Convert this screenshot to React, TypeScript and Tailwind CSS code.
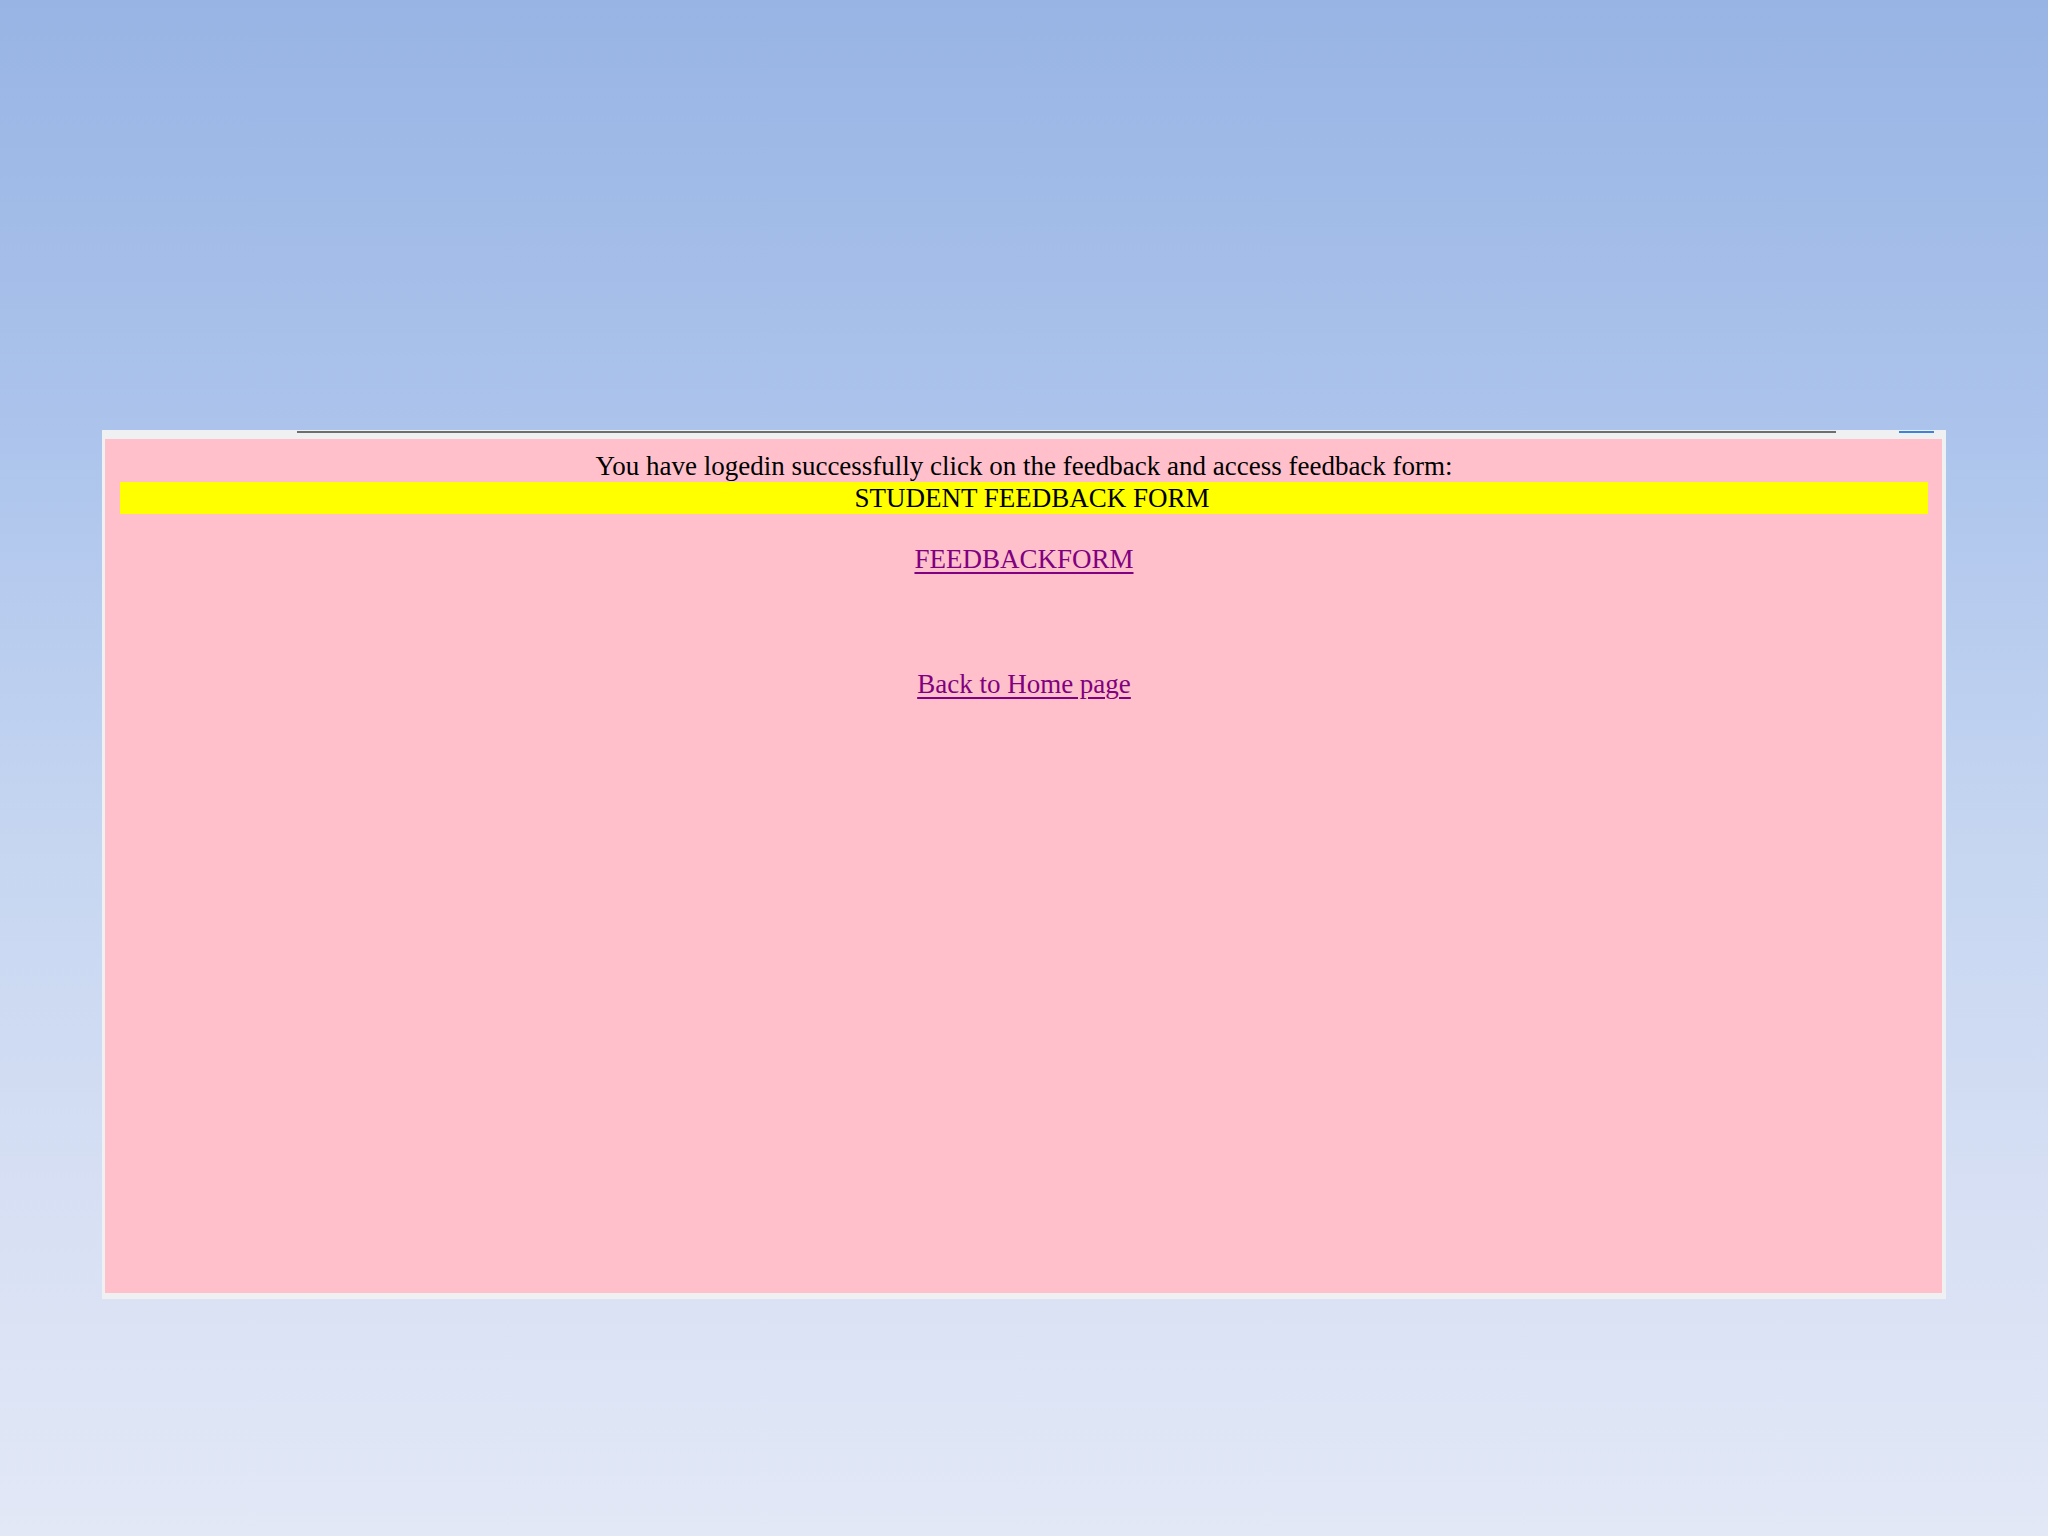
import React from "react";

export default function App() {
  return (
    <div className="w-full h-[1536px] overflow-hidden bg-[linear-gradient(to_bottom,#98b4e4_0%,#acc4ec_28%,#c6d6f1_55%,#d8e0f4_80%,#e2e8f6_100%)] pt-[430px] pl-[102px] font-['Liberation_Serif',serif]">
      <div className="w-[1844px] h-[869px] flex flex-col bg-[#eef0f1] pl-[3px] pr-[4px] pb-[6px]">
        <div className="h-[9px] flex items-start -ml-[3px]">
          <div className="ml-[195px] mt-[1px] w-[1539px] h-[2px] bg-[#6e6e6e]" />
          <div className="ml-[63px] mt-[1px] w-[35px] h-[2px] bg-[#3d83d9]" />
        </div>
        <div className="flex-1 bg-[#ffc0cb] pt-[11px] pl-[15px] pr-[14px] flex flex-col text-[27px] leading-[32px] text-black">
          <div className="text-center">
            You have logedin successfully click on the feedback and access feedback form:
          </div>
          <div className="h-[32px] bg-[#ffff00] text-center pl-[16px]">
            STUDENT FEEDBACK FORM
          </div>
          <div className="mt-[29px] text-center">
            <a className="text-[#800080] underline underline-offset-[4px] decoration-[2px]">FEEDBACKFORM</a>
          </div>
          <div className="mt-[93px] text-center">
            <a className="text-[#800080] underline underline-offset-[4px] decoration-[2px]">Back to Home page</a>
          </div>
        </div>
      </div>
    </div>
  );
}
